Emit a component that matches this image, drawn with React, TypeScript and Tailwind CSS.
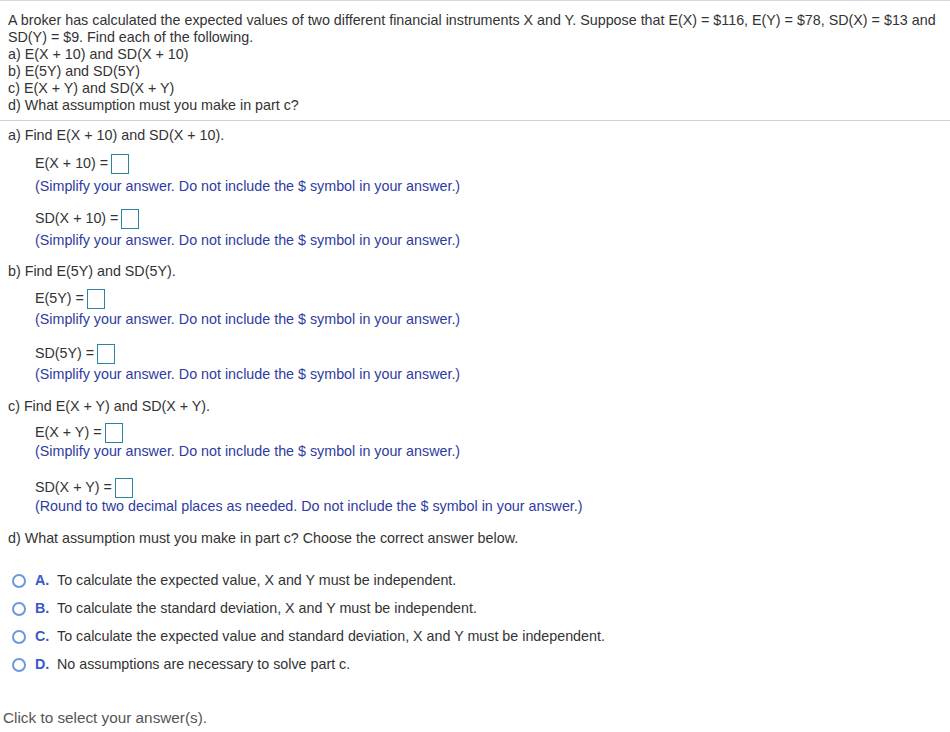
import React from 'react';

const Box = () => (
  <span className="inline-block shrink-0 w-[18px] h-[20px] border-[1.5px] border-[#2a86a0] ml-[3px] bg-white" />
);

const Answer = ({ label, hint, gap }: { label: string; hint: string; gap: string }) => (
  <div className="pl-[27px]">
    <div className="flex items-center h-[17px]">
      <span>{label} =</span>
      <Box />
    </div>
    <div className={`text-[#2e3ba0] ${gap}`}>{hint}</div>
  </div>
);

const simplify = '(Simplify your answer. Do not include the $ symbol in your answer.)';

const options = [
  { key: 'A.', text: 'To calculate the expected value, X and Y must be independent.' },
  { key: 'B.', text: 'To calculate the standard deviation, X and Y must be independent.' },
  { key: 'C.', text: 'To calculate the expected value and standard deviation, X and Y must be independent.' },
  { key: 'D.', text: 'No assumptions are necessary to solve part c.' },
];

export default function App() {
  return (
    <div
      className="w-[950px] h-[732px] bg-white text-[#333] text-[14.3px] leading-[17px] border-t border-[#d3d6de]"
      style={{ fontFamily: '"Liberation Sans", Arial, sans-serif' }}
    >
      <div className="px-2 pt-[11px] pb-[6px] border-b border-[#cfd2da]">
        <div>
          A broker has calculated the expected values of two different financial instruments X and Y. Suppose that E(X) = $116, E(Y) = $78, SD(X) = $13 and SD(Y) = $9. Find each of the following.
        </div>
        <div>a) E(X + 10) and SD(X + 10)</div>
        <div>b) E(5Y) and SD(5Y)</div>
        <div>c) E(X + Y) and SD(X + Y)</div>
        <div>d) What assumption must you make in part c?</div>
      </div>

      <div className="px-2 pt-[6px]">
        <div>a) Find E(X + 10) and SD(X + 10).</div>
        <div className="mt-[11px]">
          <Answer label="E(X + 10)" hint={simplify} gap="mt-[6px]" />
        </div>
        <div className="mt-[15px]">
          <Answer label="SD(X + 10)" hint={simplify} gap="mt-[5px]" />
        </div>

        <div className="mt-[14px]">b) Find E(5Y) and SD(5Y).</div>
        <div className="mt-[10px]">
          <Answer label="E(5Y)" hint={simplify} gap="mt-[4px]" />
        </div>
        <div className="mt-[17px]">
          <Answer label="SD(5Y)" hint={simplify} gap="mt-[4px]" />
        </div>

        <div className="mt-[15px]">c) Find E(X + Y) and SD(X + Y).</div>
        <div className="mt-[9px]">
          <Answer label="E(X + Y)" hint={simplify} gap="mt-[2px]" />
        </div>
        <div className="mt-[19px]">
          <Answer label="SD(X + Y)" hint="(Round to two decimal places as needed. Do not include the $ symbol in your answer.)" gap="mt-[2px]" />
        </div>

        <div className="mt-[15px]">d) What assumption must you make in part c? Choose the correct answer below.</div>

        <div className="mt-[25px] flex flex-col gap-[11px]">
          {options.map((o) => (
            <div key={o.key} className="flex items-center h-[17px]">
              <span className="ml-[4px] w-[14px] h-[14px] rounded-full border-2 border-[#6b98dc] bg-white" />
              <span className="ml-[9px] w-[22px] font-bold text-[#3a59c6]">{o.key}</span>
              <span>{o.text}</span>
            </div>
          ))}
        </div>
      </div>

      <div className="px-[3px] mt-[36px] text-[15.3px] text-[#555]">Click to select your answer(s).</div>
    </div>
  );
}
